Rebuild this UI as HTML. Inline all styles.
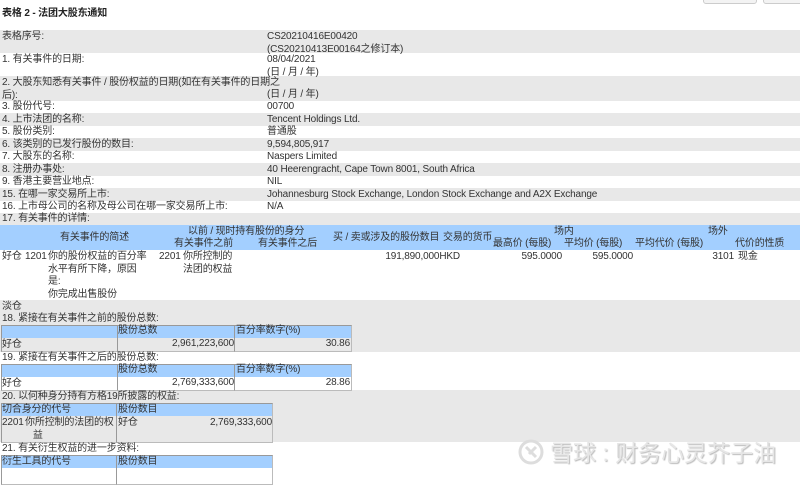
<!DOCTYPE html>
<html><head><meta charset="utf-8"><style>
*{margin:0;padding:0;box-sizing:border-box}
body{width:800px;height:478px;overflow:hidden;background:#fff;position:relative;font-family:"Liberation Sans","Noto Sans CJK SC",sans-serif;font-size:10px;letter-spacing:-0.15px;color:#333;line-height:12.5px}
.a{position:absolute;white-space:nowrap}
.g{position:absolute;left:0;width:800px;background:#e8e8e8}
.b{position:absolute;background:#a3cfff}
.r{text-align:right}
.cell{position:absolute;border:1px solid #bbb;border-top-color:#999;border-left-color:#999}
</style></head><body>
<div class="a" style="left:2px;top:8px;font-weight:bold;color:#222">表格 2 - 法团大股东通知</div>
<div class="a" style="left:703px;top:-6px;width:54px;height:10px;border:1px solid #ccc;border-radius:3px;background:#f3f3f3"></div>
<div class="a" style="left:763px;top:-6px;width:40px;height:10px;border:1px solid #ccc;border-radius:3px;background:#f3f3f3"></div>

<div class="g" style="top:30px;height:23px"></div>
<div class="g" style="top:76px;height:25px"></div>
<div class="g" style="top:113px;height:13px"></div>
<div class="g" style="top:138px;height:13px"></div>
<div class="g" style="top:163px;height:13px"></div>
<div class="g" style="top:188px;height:13px"></div>
<div class="g" style="top:213px;height:12px"></div>
<div class="b" style="left:0;top:225px;width:800px;height:25px"></div>
<div class="g" style="top:300px;height:52px"></div>
<div class="g" style="top:390px;height:52px"></div>

<div class="a" style="left:2px;top:31px">表格序号:</div>
<div class="a" style="left:267px;top:31px">CS20210416E00420<br>(CS20210413E00164之修订本)</div>
<div class="a" style="left:2px;top:54px">1. 有关事件的日期:</div>
<div class="a" style="left:267px;top:54px">08/04/2021<br>(日 / 月 / 年)</div>
<div class="a" style="left:2px;top:77px">2. 大股东知悉有关事件 / 股份权益的日期(如在有关事件的日期之<br>后):</div>
<div class="a" style="left:267px;top:89px">(日 / 月 / 年)</div>
<div class="a" style="left:2px;top:101px">3. 股份代号:</div><div class="a" style="left:267px;top:101px">00700</div>
<div class="a" style="left:2px;top:114px">4. 上市法团的名称:</div><div class="a" style="left:267px;top:114px">Tencent Holdings Ltd.</div>
<div class="a" style="left:2px;top:126px">5. 股份类别:</div><div class="a" style="left:267px;top:126px">普通股</div>
<div class="a" style="left:2px;top:139px">6. 该类别的已发行股份的数目:</div><div class="a" style="left:267px;top:139px">9,594,805,917</div>
<div class="a" style="left:2px;top:151px">7. 大股东的名称:</div><div class="a" style="left:267px;top:151px">Naspers Limited</div>
<div class="a" style="left:2px;top:164px">8. 注册办事处:</div><div class="a" style="left:267px;top:164px">40 Heerengracht, Cape Town 8001, South Africa</div>
<div class="a" style="left:2px;top:176px">9. 香港主要营业地点:</div><div class="a" style="left:267px;top:176px">NIL</div>
<div class="a" style="left:2px;top:189px">15. 在哪一家交易所上市:</div><div class="a" style="left:267px;top:189px">Johannesburg Stock Exchange, London Stock Exchange and A2X Exchange</div>
<div class="a" style="left:2px;top:201px">16. 上市母公司的名称及母公司在哪一家交易所上市:</div><div class="a" style="left:267px;top:201px">N/A</div>
<div class="a" style="left:2px;top:213px">17. 有关事件的详情:</div>

<div class="a" style="left:60px;top:232px">有关事件的简述</div>
<div class="a" style="left:188px;top:226px">以前 / 现时持有股份的身分</div>
<div class="a" style="left:174px;top:238px">有关事件之前</div>
<div class="a" style="left:258px;top:238px">有关事件之后</div>
<div class="a" style="left:333px;top:232px">买 / 卖或涉及的股份数目</div>
<div class="a" style="left:443px;top:232px">交易的货币</div>
<div class="a" style="left:554px;top:226px">场内</div>
<div class="a" style="left:708px;top:226px">场外</div>
<div class="a" style="left:493px;top:238px">最高价 (每股)</div>
<div class="a" style="left:564px;top:238px">平均价 (每股)</div>
<div class="a" style="left:635px;top:238px">平均代价 (每股)</div>
<div class="a" style="left:735px;top:238px">代价的性质</div>

<div class="a" style="left:2px;top:251px">好仓</div>
<div class="a" style="left:25px;top:251px">1201</div>
<div class="a" style="left:48px;top:251px">你的股份权益的百分率<br>水平有所下降，原因<br>是:<br>你完成出售股份</div>
<div class="a" style="left:159px;top:251px">2201</div>
<div class="a" style="left:183px;top:251px">你所控制的<br>法团的权益</div>
<div class="a r" style="left:360px;width:100px;top:251px">191,890,000HKD</div>
<div class="a r" style="left:500px;width:62px;top:251px">595.0000</div>
<div class="a r" style="left:570px;width:63px;top:251px">595.0000</div>
<div class="a r" style="left:700px;width:34px;top:251px">3101</div>
<div class="a" style="left:738px;top:251px">现金</div>

<div class="a" style="left:2px;top:301px">淡仓</div>
<div class="a" style="left:2px;top:313px">18. 紧接在有关事件之前的股份总数:</div>
<div class="b" style="left:1px;top:325px;width:351px;height:13px"></div>
<div class="cell" style="left:1px;top:325px;width:117px;height:27px"></div>
<div class="cell" style="left:117px;top:325px;width:118px;height:27px"></div>
<div class="cell" style="left:234px;top:325px;width:118px;height:27px"></div>
<div class="a" style="left:118px;top:325px">股份总数</div><div class="a" style="left:236px;top:325px">百分率数字(%)</div>
<div class="a" style="left:2px;top:339px">好仓</div>
<div class="a r" style="left:118px;width:116px;top:338px">2,961,223,600</div>
<div class="a r" style="left:236px;width:114px;top:338px">30.86</div>

<div class="a" style="left:2px;top:352px">19. 紧接在有关事件之后的股份总数:</div>
<div class="b" style="left:1px;top:364px;width:351px;height:13px"></div>
<div class="cell" style="left:1px;top:364px;width:117px;height:27px"></div>
<div class="cell" style="left:117px;top:364px;width:118px;height:27px"></div>
<div class="cell" style="left:234px;top:364px;width:118px;height:27px"></div>
<div class="a" style="left:118px;top:364px">股份总数</div><div class="a" style="left:236px;top:364px">百分率数字(%)</div>
<div class="a" style="left:2px;top:378px">好仓</div>
<div class="a r" style="left:118px;width:116px;top:377px">2,769,333,600</div>
<div class="a r" style="left:236px;width:114px;top:377px">28.86</div>

<div class="a" style="left:2px;top:391px">20. 以何种身分持有方格19所披露的权益:</div>
<div class="b" style="left:1px;top:403px;width:272px;height:13px"></div>
<div class="cell" style="left:1px;top:403px;width:116px;height:40px"></div>
<div class="cell" style="left:116px;top:403px;width:157px;height:40px"></div>
<div class="a" style="left:2px;top:404px">切合身分的代号</div><div class="a" style="left:118px;top:404px">股份数目</div>
<div class="a" style="left:2px;top:417px">2201</div>
<div class="a" style="left:25px;top:417px">你所控制的法团的权<br>&nbsp;&nbsp;&nbsp;益</div>
<div class="a" style="left:118px;top:417px">好仓</div>
<div class="a r" style="left:150px;width:122px;top:417px">2,769,333,600</div>

<div class="a" style="left:2px;top:443px">21. 有关衍生权益的进一步资料:</div>
<div class="b" style="left:1px;top:455px;width:272px;height:13px"></div>
<div class="cell" style="left:1px;top:455px;width:116px;height:30px"></div>
<div class="cell" style="left:116px;top:455px;width:157px;height:30px"></div>
<div class="a" style="left:2px;top:456px">衍生工具的代号</div><div class="a" style="left:118px;top:456px">股份数目</div>

<svg class="a" style="left:517px;top:438px" width="28" height="28" viewBox="0 0 28 28"><circle cx="14" cy="14" r="11" fill="none" stroke="#ddd" stroke-width="3"/><path d="M9 9 L19 19 M19 9 L12 16" stroke="#ddd" stroke-width="3" fill="none"/></svg>
<div class="a" style="left:550px;top:440px;font-size:23px;letter-spacing:0;line-height:26px;color:#e6e6e6;text-shadow:1px 1px 1px #bbb">雪球 : 财务心灵芥子油</div>
</body></html>
